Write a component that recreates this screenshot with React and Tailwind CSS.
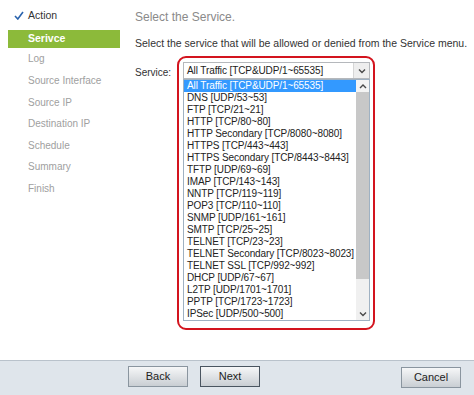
import React from "react";

const STEPS = ["Log", "Source Interface", "Source IP", "Destination IP", "Schedule", "Summary", "Finish"];

const SERVICES = [
  "All Traffic [TCP&UDP/1~65535]",
  "DNS [UDP/53~53]",
  "FTP [TCP/21~21]",
  "HTTP [TCP/80~80]",
  "HTTP Secondary [TCP/8080~8080]",
  "HTTPS [TCP/443~443]",
  "HTTPS Secondary [TCP/8443~8443]",
  "TFTP [UDP/69~69]",
  "IMAP [TCP/143~143]",
  "NNTP [TCP/119~119]",
  "POP3 [TCP/110~110]",
  "SNMP [UDP/161~161]",
  "SMTP [TCP/25~25]",
  "TELNET [TCP/23~23]",
  "TELNET Secondary [TCP/8023~8023]",
  "TELNET SSL [TCP/992~992]",
  "DHCP [UDP/67~67]",
  "L2TP [UDP/1701~1701]",
  "PPTP [TCP/1723~1723]",
  "IPSec [UDP/500~500]",
];

const Chevron = ({ up }) => (
  <svg width="8" height="6" viewBox="0 0 8 6">
    <path d={up ? "M1 5 L4 2 L7 5" : "M1 1.5 L4 4.5 L7 1.5"} fill="none" stroke="#4a4a4a" strokeWidth="1.4" />
  </svg>
);

const Button = ({ children, strong }) => (
  <button
    className={
      strong
        ? "h-[21px] w-[60px] border border-[#4a5560] bg-gradient-to-b from-[#f6f7f8] to-[#c9ced3] text-[11px] text-[#222]"
        : "h-[21px] w-[60px] border border-[#8a959f] bg-gradient-to-b from-[#f6f7f8] to-[#c9ced3] text-[11px] text-[#222]"
    }
  >
    {children}
  </button>
);

export default function App() {
  return (
    <div className="flex h-[395px] w-[474px] flex-col bg-white font-['Liberation_Sans',Arial,sans-serif]">
      <div className="flex flex-1">
        {/* wizard steps */}
        <div className="w-[135px] pl-2 pt-[5px]">
          <div className="flex h-[21.6px] items-center text-[10.5px] text-[#333]">
            <svg width="10" height="9" viewBox="0 0 10 9" className="ml-[6px] mr-[4px]">
              <path d="M1 5 L3.8 8 L9 1" fill="none" stroke="#2a63ad" strokeWidth="1.6" />
            </svg>
            Action
          </div>
          <div className="h-[21.6px] pt-[3px]">
            <div className="flex h-[18px] w-[112px] items-center bg-[#8cba3a] pl-5 text-[10.5px] font-bold text-white">
              Serivce
            </div>
          </div>
          {STEPS.map((s) => (
            <div key={s} className="flex h-[21.6px] items-center pl-5 text-[10px] text-[#a0a0a0]">
              {s}
            </div>
          ))}
        </div>

        {/* content */}
        <div className="flex-1 pt-[9px]">
          <div className="text-[12px] leading-[16px] text-[#8a8a8a]">Select the Service.</div>
          <div className="mt-[12px] whitespace-nowrap text-[10.5px] leading-[12px] text-[#333]">
            Select the service that will be allowed or denied from the Service menu.
          </div>
          <div className="mt-[7px] flex">
            <div className="w-[42px] pt-[9px] text-[10px] text-[#333]">Service:</div>
            <div className="w-[198px] rounded-[9px] border-2 border-[#d3141e] pb-[7px] pl-[4px] pr-[3px] pt-[4px]">
              <div className="flex h-[17px] items-center border border-[#b5b8bc] bg-white">
                <span className="flex-1 pl-[3px] text-[10px] tracking-[-0.1px] text-[#222]">All Traffic [TCP&amp;UDP/1~65535]</span>
                <span className="flex h-[15px] w-[16px] items-center justify-center border-l border-[#d6d6d6] bg-[#eeeeee]">
                  <Chevron />
                </span>
              </div>
              <div className="flex h-[242px] border border-[#9fb1c2] bg-white">
                <div className="flex-1 overflow-hidden">
                  {SERVICES.map((s, i) => (
                    <div
                      key={s}
                      className={
                        i === 0
                          ? "h-[12px] whitespace-nowrap bg-[#3399ff] pl-[3px] text-[10px] leading-[12px] tracking-[-0.1px] text-white"
                          : "h-[12px] whitespace-nowrap pl-[3px] text-[10px] leading-[12px] tracking-[-0.1px] text-[#222]"
                      }
                    >
                      {s}
                    </div>
                  ))}
                </div>
                <div className="flex w-[13px] flex-col bg-[#f0f0f0]">
                  <div className="flex h-[12px] items-center justify-center bg-[#f4f4f4]">
                    <Chevron up />
                  </div>
                  <div className="h-[187px] bg-[#c8c8c8]" />
                  <div className="flex-1" />
                  <div className="flex h-[12px] items-center justify-center">
                    <Chevron />
                  </div>
                </div>
              </div>
            </div>
          </div>
        </div>
      </div>

      {/* footer */}
      <div className="flex h-[35px] items-center border-t border-[#b9c2cb] bg-[#dfe5eb] pb-[4px]">
        <div className="ml-[128px] flex gap-[12px]">
          <Button>Back</Button>
          <Button strong>Next</Button>
        </div>
        <div className="ml-auto mr-[13px]">
          <Button>Cancel</Button>
        </div>
      </div>
    </div>
  );
}
